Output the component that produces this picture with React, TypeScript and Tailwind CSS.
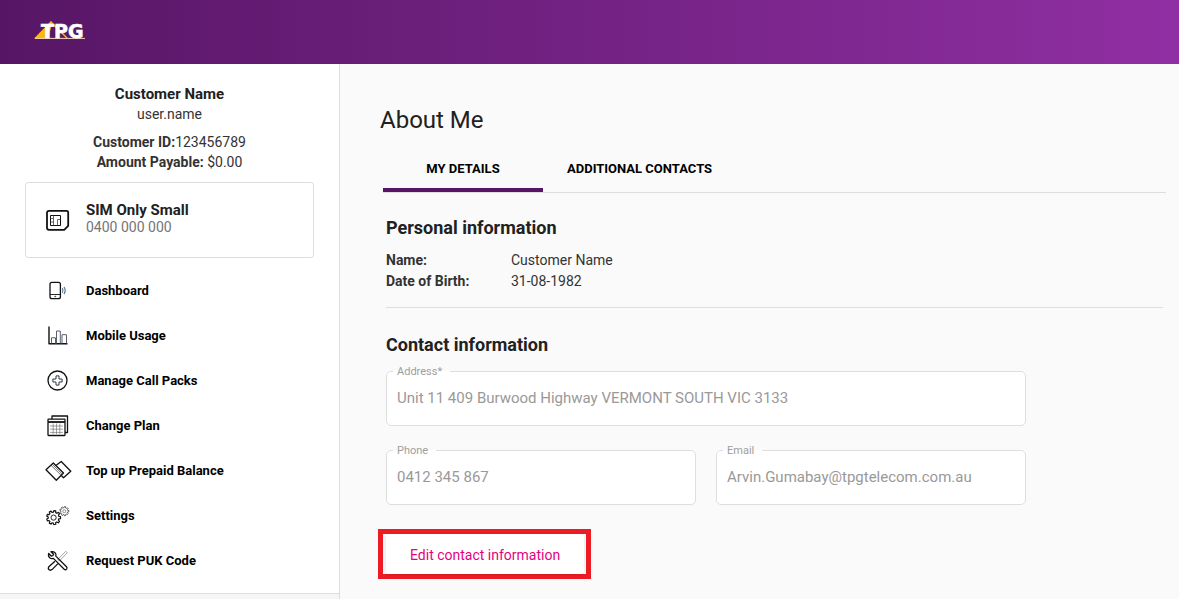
import type { ReactNode } from "react";

function Logo() {
  return (
    <svg width="54" height="22" viewBox="0 0 54 22" role="img" aria-label="TPG">
      <path d="M1 19.5 L18 2 L19 5 L15 19.5 Z" fill="#fdb60d" />
      <path d="M17.5 2.5 L34 19" stroke="#fdb60d" strokeWidth="1.4" fill="none" />
      <path d="M2 19.4 H52" stroke="#f3d9c0" strokeWidth="1" />
      <text
        x="8"
        y="19"
        fill="#fff"
        stroke="#fff"
        strokeWidth="0.6"
        className="font-['DejaVu_Sans',sans-serif] text-[19px] font-bold"
      >
        TPG
      </text>
    </svg>
  );
}

function gearPath(cx: number, cy: number, inner: number, outer: number, teeth: number) {
  const points: string[] = [];
  const step = (Math.PI * 2) / teeth;
  const corners: [number, number][] = [
    [-0.32, inner],
    [-0.2, outer],
    [0.2, outer],
    [0.32, inner],
  ];
  for (let i = 0; i < teeth; i++) {
    for (const [offset, radius] of corners) {
      const angle = (i + offset) * step;
      points.push(`${(cx + radius * Math.cos(angle)).toFixed(2)} ${(cy + radius * Math.sin(angle)).toFixed(2)}`);
    }
  }
  return `M${points.join("L")}Z`;
}

function Icon({ children }: { children: ReactNode }) {
  return (
    <svg
      width="28"
      height="28"
      viewBox="0 0 28 28"
      fill="none"
      stroke="#111"
      strokeWidth="1.3"
      strokeLinejoin="round"
      className="shrink-0"
      aria-hidden="true"
    >
      {children}
    </svg>
  );
}

const icons: Record<string, ReactNode> = {
  sim: (
    <>
      <path d="M5 4.8H22.5Q24.2 4.8 24.2 6.5V19.8L20.2 23.8H5Q3 23.8 3 21.8V6.8Q3 4.8 5 4.8Z" strokeWidth="1.8" />
      <path d="M6.5 9.5H16.5V19.5H6.5Z" strokeWidth="1" />
      <path d="M9.5 9.5V19.5M6.5 12.5H9.5M6.5 16H9.5M13.5 19.5V13.5H16.5" stroke="#444" strokeWidth="0.8" />
    </>
  ),
  phone: (
    <>
      <rect x="6" y="5.3" width="10.4" height="16.4" rx="2" />
      <path d="M6 17.5H16.4" strokeWidth="0.9" />
      <circle cx="11.2" cy="19.5" r="0.5" strokeWidth="0.7" />
      <path d="M18.4 11.3Q19.8 13.5 18.4 15.7M20 10Q22.4 13.5 20 17" stroke="#4d6488" strokeWidth="1.1" />
    </>
  ),
  usage: (
    <>
      <path d="M5 4.5V21.8H23.5" strokeWidth="1.4" />
      <path d="M7.5 21.5V15.8H11.5V21.5M12.5 21.5V9H16.3V21.5M18 21.5V12.7H22.5V21.5" stroke="#59606c" strokeWidth="1" />
    </>
  ),
  plus: (
    <>
      <circle cx="13.5" cy="13.5" r="9.5" />
      <path d="M12 8.9H15V12H18.1V15H15V18.1H12V15H8.9V12H12Z" stroke="#30384b" strokeWidth="1" />
    </>
  ),
  plan: (
    <>
      <path d="M8 7V4H23.5V20.5H21" />
      <rect x="4" y="7.2" width="17" height="16.3" rx="0.5" />
      <path d="M4 10H21" strokeWidth="1.8" />
      <path d="M6 14H19M6 17.2H19M6 20.4H19M9.2 11.5V22M12.5 11.5V22M15.8 11.5V22" stroke="#777" strokeWidth="0.7" />
    </>
  ),
  cards: (
    <>
      <path d="M2 12.7L9.3 6L19.5 16L12.3 23.3Z" />
      <path d="M12.2 8.2L17.2 4.5L26.8 14.2L19.5 20.8L17.5 18.8" />
      <path d="M7 8.3L17.2 18.3M8.2 7.2L18.4 17.2" stroke="#333" strokeWidth="0.7" />
    </>
  ),
  gears: (
    <>
      <path d={gearPath(9.6, 15.6, 5.4, 7, 9)} strokeWidth="1.2" />
      <circle cx="9.6" cy="15.6" r="2.6" strokeWidth="0.9" />
      <path d={gearPath(20.3, 9.2, 3.5, 4.6, 9)} stroke="#4b4b55" strokeWidth="0.9" />
      <circle cx="20.3" cy="9.2" r="1.5" stroke="#777" strokeWidth="0.8" />
    </>
  ),
  tools: (
    <>
      <path d="M21.8 4.3L23.3 5.8L15.3 14L13.7 12.5Z" stroke="#999" strokeWidth="0.9" />
      <path d="M11 14.2L4.8 19.8Q3.6 22 5.4 23Q6.8 23.6 8 22.6L14 16.6" />
      <path d="M7 4.7L9.6 7.3L8.8 8.7L7.2 9L4.7 6.5Q3.8 9.5 6 11Q7.4 12 9.4 11.4L20.2 22.2Q21.5 23.3 22.6 22.1Q23.6 20.9 22.5 19.8L11.8 9.1Q12.5 7 10.8 5.5Q9.2 4.2 7 4.7Z" />
    </>
  ),
};

const navItems = [
  { icon: "phone", label: "Dashboard" },
  { icon: "usage", label: "Mobile Usage" },
  { icon: "plus", label: "Manage Call Packs" },
  { icon: "plan", label: "Change Plan" },
  { icon: "cards", label: "Top up Prepaid Balance" },
  { icon: "gears", label: "Settings" },
  { icon: "tools", label: "Request PUK Code" },
];

function Field({ id, label, value, type = "text" }: { id: string; label: string; value: string; type?: string }) {
  return (
    <fieldset className="min-w-0 flex-1 rounded-[5px] border border-[#dedede] bg-white px-1.5 pb-4">
      <legend className="pt-0.5 pr-2 pl-1 text-[11px] leading-4 text-[#9e9e9e]">
        <label htmlFor={id} className="block">
          {label}
        </label>
      </legend>
      <input
        id={id}
        type={type}
        defaultValue={value}
        readOnly
        className="mt-[9px] block h-5 w-full bg-transparent px-1 text-[15px] text-[#999] outline-none"
      />
    </fieldset>
  );
}

export default function App() {
  return (
    <div className="flex min-h-screen flex-col bg-[#fafafa] font-['Roboto',sans-serif] text-sm text-[#333]">
      <header className="flex h-16 items-center bg-linear-to-r from-[#571665] to-[#902fa3] px-8 pb-1">
        <a href="#" className="block pl-px">
          <Logo />
        </a>
      </header>

      <div className="flex flex-1">
        <aside className="w-[340px] shrink-0 border-r border-[#dedede] bg-[#f5f5f5]">
          <div className="border-b border-[#dedede] bg-white px-[25px] pt-5 pb-[10px]">
            <div className="text-center leading-5">
              <h2 className="text-[15px] font-bold text-[#212121]">Customer Name</h2>
              <p>user.name</p>
              <p className="mt-2">
                <strong className="font-bold">Customer ID:</strong>123456789
              </p>
              <p>
                <strong className="font-bold">Amount Payable:</strong> $0.00
              </p>
            </div>

            <section className="mt-[10px] flex h-[76px] items-center rounded-[3px] border border-[#dedede] pl-[18px]">
              <Icon>{icons.sim}</Icon>
              <div className="ml-[14px] pb-1">
                <h3 className="text-[15px] leading-[18px] font-bold text-[#212121]">SIM Only Small</h3>
                <p className="leading-4 text-[#757575]">0400 000 000</p>
              </div>
            </section>

            <nav className="mt-[10px]">
              {navItems.map((item) => (
                <a
                  key={item.label}
                  href="#"
                  className="flex h-[45px] items-center pl-[19px] text-[13px] leading-[21px] font-bold text-black"
                >
                  <Icon>{icons[item.icon]}</Icon>
                  <span className="ml-[14px]">{item.label}</span>
                </a>
              ))}
            </nav>
          </div>
        </aside>

        <main className="min-w-0 flex-1 pt-10 pr-[13px] pl-10">
          <h1 className="text-2xl text-[#212121]">About Me</h1>

          <div role="tablist" className="mt-2 ml-[3px] flex border-b border-[#dedede] text-[13px] font-bold text-black">
            <button role="tab" aria-selected="true" className="h-12 w-40 border-b-4 border-[#571665] pt-1.5">
              MY DETAILS
            </button>
            <button role="tab" aria-selected="false" className="h-12 border-b-4 border-transparent px-6 pt-1.5">
              ADDITIONAL CONTACTS
            </button>
          </div>

          <div className="pr-[3px] pl-[6px]">
            <section className="border-b border-[#dedede] pt-[23px] pb-[15px]">
              <h2 className="text-lg leading-6 font-bold text-[#212121]">Personal information</h2>
              <dl className="mt-[10px] grid grid-cols-[125px_1fr] leading-[21px]">
                <dt className="font-bold">Name:</dt>
                <dd>Customer Name</dd>
                <dt className="font-bold">Date of Birth:</dt>
                <dd>31-08-1982</dd>
              </dl>
            </section>

            <section className="max-w-[640px] pt-[25px]">
              <h2 className="text-lg leading-6 font-bold text-[#212121]">Contact information</h2>
              <div className="mt-[5px] flex">
                <Field id="address" label="Address*" value="Unit 11 409 Burwood Highway VERMONT SOUTH VIC 3133" />
              </div>
              <div className="mt-[15px] flex gap-5">
                <Field id="phone" label="Phone" type="tel" value="0412 345 867" />
                <Field id="email" label="Email" type="email" value="Arvin.Gumabay@tpgtelecom.com.au" />
              </div>
              <div className="mt-6 -ml-2 inline-block border-5 border-[#ed1c24] pr-[2px] pl-[3px]">
                <button className="block h-10 rounded-[3px] bg-white px-6 pt-0.5 text-sm text-[#e6007e] shadow-sm">
                  Edit contact information
                </button>
              </div>
            </section>
          </div>
        </main>
      </div>
    </div>
  );
}
